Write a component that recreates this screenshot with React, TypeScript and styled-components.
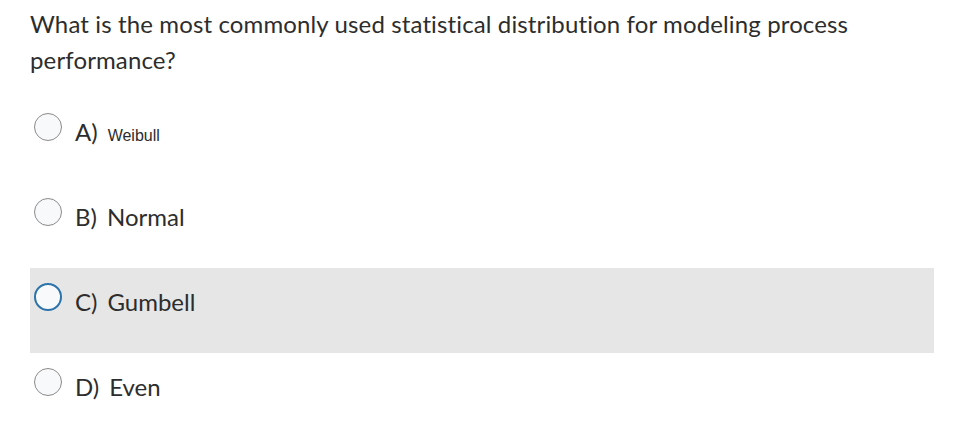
import React from "react";
import styled, { createGlobalStyle } from "styled-components";

const Global = createGlobalStyle`
  html, body { margin: 0; padding: 0; background: #ffffff; }
  body { font-family: Lato, "Noto Sans", sans-serif; color: #2d2d2d; }
`;

const Page = styled.div`
  padding: 6px 0 0 30px;
  width: 904px;
`;

const Question = styled.div`
  font-size: 24px;
  line-height: 36px;
  letter-spacing: 0.13px;
  color: #2d2d2d;
  margin: 0 0 20px 0;
  padding-right: 40px;
`;

const Answers = styled.div`
  display: flex;
  flex-direction: column;
`;

const Row = styled.label<{ $active?: boolean }>`
  display: flex;
  align-items: flex-start;
  height: 85px;
  box-sizing: border-box;
  padding: 15px 0 0 4px;
  background: ${(p) => (p.$active ? "#e6e6e6" : "transparent")};
`;

const Radio = styled.span<{ $active?: boolean }>`
  flex: none;
  width: 28px;
  height: 28px;
  box-sizing: border-box;
  border-radius: 50%;
  background: #f8f9fb;
  border: ${(p) => (p.$active ? "2px solid #2b73aa" : "1px solid #8a8a8a")};
`;

const Text = styled.span`
  display: flex;
  align-items: baseline;
  margin-left: 13px;
  font-size: 24px;
  line-height: 38px;
  color: #2d2d2d;
`;

const Letter = styled.span`
  margin-right: 10px;
`;

const Small = styled.span`
  font-family: "Liberation Sans", Arial, sans-serif;
  font-size: 16px;
`;

const answers = [
  { letter: "A)", text: "Weibull", small: true },
  { letter: "B)", text: "Normal" },
  { letter: "C)", text: "Gumbell", active: true },
  { letter: "D)", text: "Even" },
];

export default function App() {
  return (
    <>
      <Global />
      <Page>
        <Question>
          What is the most commonly used statistical distribution for modeling process performance?
        </Question>
        <Answers>
          {answers.map((a) => (
            <Row key={a.letter} $active={a.active}>
              <Radio $active={a.active} />
              <Text>
                <Letter>{a.letter}</Letter>
                {a.small ? <Small>{a.text}</Small> : <span>{a.text}</span>}
              </Text>
            </Row>
          ))}
        </Answers>
      </Page>
    </>
  );
}
